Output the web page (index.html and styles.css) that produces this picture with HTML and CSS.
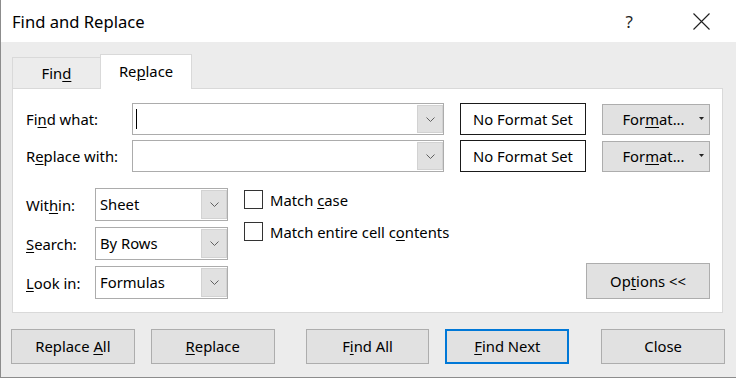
FILE: index.html
```html
<!DOCTYPE html>
<html lang="en">
<head>
<meta charset="utf-8">
<title>Find and Replace</title>
<link rel="stylesheet" href="styles.css">
</head>
<body>
<div class="window">
  <header class="titlebar">
    <span class="title">Find and Replace</span>
    <div class="title-controls">
      <span class="help">?</span>
      <span class="close-x"><svg width="17" height="17" viewBox="0 0 17 17"><path d="M0.5 0.5L16.5 16.5M16.5 0.5L0.5 16.5" stroke="#1f1f1f" stroke-width="1.1" fill="none"/></svg></span>
    </div>
  </header>
  <main class="content">
    <div class="tabs">
      <div class="tab"><span>Fin<u>d</u></span></div>
      <div class="tab active"><span>Re<u>p</u>lace</span></div>
    </div>
    <section class="panel">
      <div class="find-grid">
        <span class="lbl">Fi<u>n</u>d what:</span>
        <div class="combo"><span class="caret"></span><span class="combo-text"></span><span class="drop"><svg width="9" height="5" viewBox="0 0 9 5"><polyline points="0.5,0.5 4.5,4.5 8.5,0.5" fill="none" stroke="#606060" stroke-width="1"/></svg></span></div>
        <div class="noformat">No Format Set</div>
        <div class="btn format"><span class="fmt-text">For<u>m</u>at...</span><svg class="fmt-arrow" width="5" height="3" viewBox="0 0 5 3"><polygon points="0,0 5,0 2.5,3" fill="#222"/></svg></div>

        <span class="lbl">R<u>e</u>place with:</span>
        <div class="combo"><span class="combo-text"></span><span class="drop"><svg width="9" height="5" viewBox="0 0 9 5"><polyline points="0.5,0.5 4.5,4.5 8.5,0.5" fill="none" stroke="#606060" stroke-width="1"/></svg></span></div>
        <div class="noformat">No Format Set</div>
        <div class="btn format"><span class="fmt-text">For<u>m</u>at...</span><svg class="fmt-arrow" width="5" height="3" viewBox="0 0 5 3"><polygon points="0,0 5,0 2.5,3" fill="#222"/></svg></div>
      </div>

      <div class="options">
        <div class="opt-grid">
          <span class="lbl">Wit<u>h</u>in:</span>
          <div class="combo"><span class="combo-text">Sheet</span><span class="drop"><svg width="9" height="5" viewBox="0 0 9 5"><polyline points="0.5,0.5 4.5,4.5 8.5,0.5" fill="none" stroke="#606060" stroke-width="1"/></svg></span></div>
          <span class="lbl"><u>S</u>earch:</span>
          <div class="combo"><span class="combo-text">By Rows</span><span class="drop"><svg width="9" height="5" viewBox="0 0 9 5"><polyline points="0.5,0.5 4.5,4.5 8.5,0.5" fill="none" stroke="#606060" stroke-width="1"/></svg></span></div>
          <span class="lbl"><u>L</u>ook in:</span>
          <div class="combo"><span class="combo-text">Formulas</span><span class="drop"><svg width="9" height="5" viewBox="0 0 9 5"><polyline points="0.5,0.5 4.5,4.5 8.5,0.5" fill="none" stroke="#606060" stroke-width="1"/></svg></span></div>
        </div>
        <div class="checks">
          <div class="check-row"><span class="checkbox"></span><span>Match <u>c</u>ase</span></div>
          <div class="check-row"><span class="checkbox"></span><span>Match entire cell c<u>o</u>ntents</span></div>
        </div>
        <div class="opt-btn-wrap">
          <div class="btn options-btn"><span>Op<u>t</u>ions &lt;&lt;</span></div>
        </div>
      </div>
    </section>
    <footer class="actions">
      <div class="btn action"><span>Replace <u>A</u>ll</span></div>
      <div class="btn action gap-s"><span><u>R</u>eplace</span></div>
      <div class="btn action gap-l"><span>F<u>i</u>nd All</span></div>
      <div class="btn action gap-s default"><span><u>F</u>ind Next</span></div>
      <div class="btn action gap-xl"><span>Close</span></div>
    </footer>
  </main>
</div>
</body>
</html>
```
FILE: styles.css
```css
* { box-sizing: border-box; }
html, body { margin: 0; padding: 0; }
body {
  width: 736px;
  height: 378px;
  overflow: hidden;
  background: #ffffff;
  font-family: "Noto Sans", "DejaVu Sans", sans-serif;
  font-size: 14.8px;
  color: #000;
}
u {
  text-decoration: underline;
  text-decoration-thickness: 1px;
  text-underline-offset: 2px;
}
.window {
  width: 736px;
  height: 378px;
  display: flex;
  flex-direction: column;
  border-left: 1px solid #8c8c8c;
  border-bottom: 1px solid #8c8c8c;
  background: #ececec;
}
.titlebar {
  height: 42px;
  flex: none;
  background: #ffffff;
  display: flex;
  align-items: center;
  padding-left: 11px;
}
.title { font-size: 16.6px; color: #000; }
.title-controls {
  margin-left: auto;
  display: flex;
  align-items: center;
  padding-right: 26px;
}
.help {
  font-size: 17px;
  color: #1f1f1f;
  margin-right: 60px;
}
.close-x { display: flex; }
.content {
  flex: 1;
  display: flex;
  flex-direction: column;
  padding: 12px 13px 0 11px;
}
.tabs {
  display: flex;
  align-items: flex-end;
  height: 34px;
  flex: none;
}
.tab {
  width: 88px;
  height: 31px;
  border: 1px solid #d9d9d9;
  border-bottom: none;
  border-right: none;
  display: flex;
  align-items: center;
  justify-content: center;
  padding-bottom: 1px;
}
.tab.active {
  width: 92px;
  height: 35px;
  margin-bottom: -1px;
  background: #ffffff;
  border-right: 1px solid #d9d9d9;
  position: relative;
  z-index: 1;
  padding-bottom: 3px;
}
.panel {
  height: 225px;
  flex: none;
  background: #ffffff;
  border: 1px solid #d9d9d9;
  padding: 14px 12px 13px 13px;
  display: flex;
  flex-direction: column;
}
.find-grid {
  display: grid;
  grid-template-columns: 90px 312px 126px 108px;
  grid-auto-rows: 32px;
  column-gap: 16px;
  row-gap: 5px;
  align-items: center;
}
.lbl { white-space: nowrap; }
.combo {
  height: 100%;
  border: 1px solid #acacac;
  background: #ffffff;
  display: flex;
  align-items: stretch;
  padding: 1px 0 1px 0;
}
.caret {
  width: 1px;
  height: 20px;
  background: #000;
  align-self: center;
  margin-left: 3px;
}
.combo-text {
  flex: 1;
  display: flex;
  align-items: center;
  padding-left: 4px;
  padding-bottom: 1px;
}
.drop {
  width: 26px;
  flex: none;
  background: #e1e1e1;
  border: 1px solid #d2d2d2;
  display: flex;
  align-items: center;
  justify-content: center;
}
.noformat {
  height: 100%;
  border: 1px solid #1a1a1a;
  background: #ffffff;
  display: flex;
  align-items: center;
  justify-content: center;
  padding-bottom: 1px;
}
.btn {
  background: #e1e1e1;
  border: 1px solid #adadad;
  display: flex;
  align-items: center;
  justify-content: center;
  padding-bottom: 1px;
  white-space: nowrap;
}
.btn.format {
  height: 31px;
  display: grid;
  grid-template-columns: 1fr auto 1fr;
  align-items: center;
  padding-right: 5px;
}
.fmt-text { grid-column: 2; }
.fmt-arrow { grid-column: 3; justify-self: end; }
.options {
  display: flex;
  margin-top: 16px;
  flex: 1;
}
.opt-grid {
  display: grid;
  grid-template-columns: 53px 133px;
  grid-auto-rows: 33px;
  column-gap: 16px;
  row-gap: 6px;
  align-items: center;
}
.checks {
  margin-left: 16px;
  display: flex;
  flex-direction: column;
  padding-top: 2px;
  gap: 13px;
}
.check-row {
  display: flex;
  align-items: center;
  gap: 7px;
  height: 19px;
}
.checkbox {
  width: 19px;
  height: 19px;
  border: 1px solid #333333;
  background: #ffffff;
  flex: none;
}
.opt-btn-wrap {
  margin-left: auto;
  display: flex;
  align-items: flex-end;
}
.options-btn {
  width: 124px;
  height: 36px;
}
.actions {
  display: flex;
  margin: 16px -2px 0 -1px;
  height: 35px;
  flex: none;
}
.action {
  width: 124px;
  height: 35px;
}
.gap-s { margin-left: 16px; }
.gap-l { margin-left: 31px; }
.gap-xl { margin-left: 32px; }
.action.default {
  border: 2px solid #0078d7;
}
```
